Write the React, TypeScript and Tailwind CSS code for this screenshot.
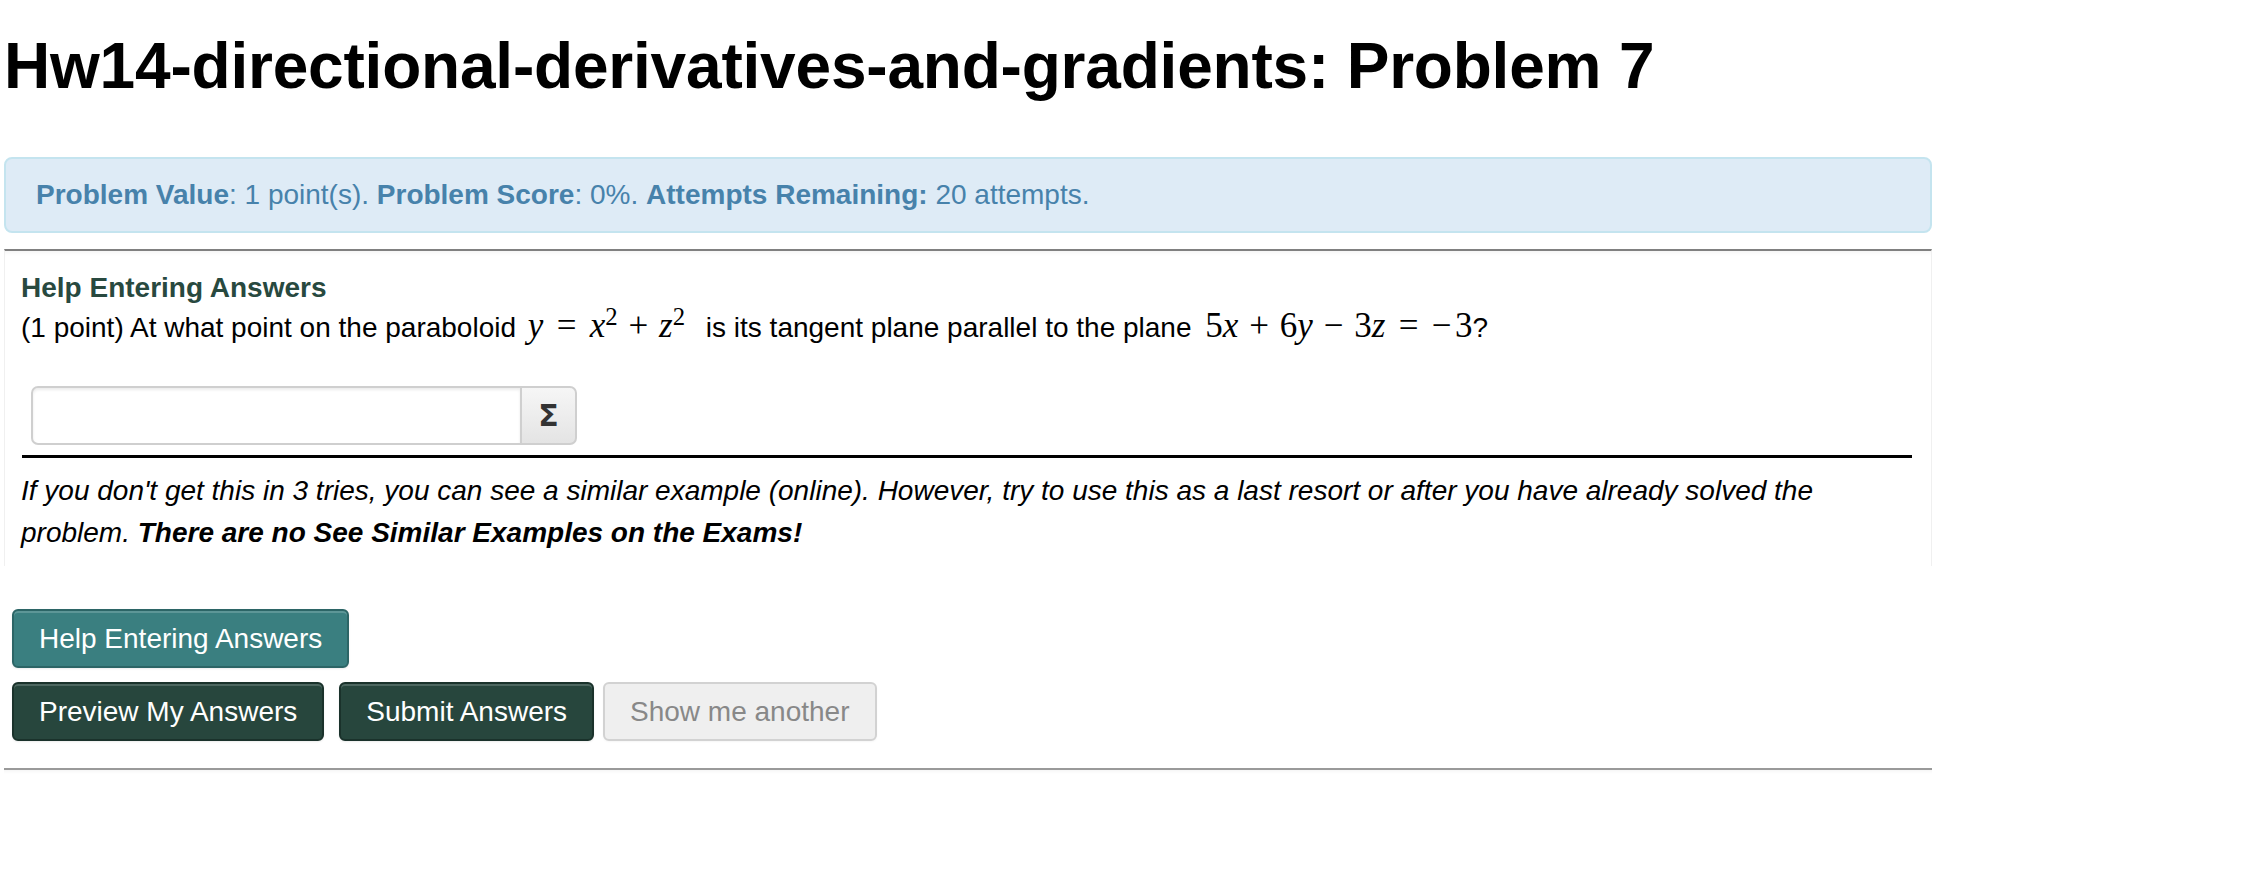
import React from 'react';

// --- Math helpers (TeX-like spacing on Liberation Serif) ---

const V = ({ children }: { children: React.ReactNode }) => <span className="italic">{children}</span>;

const Sup = ({ children }: { children: React.ReactNode }) => (
  <span className="text-[0.707em] leading-[0] align-[12px]">{children}</span>
);

const Rel = ({ children }: { children: React.ReactNode }) => <span className="mx-[0.38em]">{children}</span>;

const Bin = ({ children }: { children: React.ReactNode }) => <span className="mx-[0.31em]">{children}</span>;

const Math = ({ children, className = '' }: { children: React.ReactNode; className?: string }) => (
  <span className={`font-['Liberation_Serif','Times_New_Roman',serif] text-[35px] leading-[0] text-black ${className}`}>
    {children}
  </span>
);

// --- Components ---

const Button = ({ label, variant }: { label: string; variant: 'teal' | 'dark' | 'disabled' }) => {
  const styles = {
    teal: 'bg-[#3a7f80] border-[#2c6566] text-white shadow-[inset_0_2px_0_rgba(255,255,255,0.18),0_1px_2px_rgba(0,0,0,0.08)]',
    dark: 'bg-[#27463d] border-[#1a322b] text-white shadow-[inset_0_2px_0_rgba(255,255,255,0.18),0_1px_2px_rgba(0,0,0,0.08)]',
    disabled: 'bg-[#efefef] border-[#d2d2d2] text-[#888888] shadow-[0_1px_2px_rgba(0,0,0,0.04)]',
  };
  return (
    <button
      className={`h-[59px] px-[25px] rounded-[6px] border-2 text-[28px] leading-none flex items-center ${styles[variant]}`}
    >
      {label}
    </button>
  );
};

export default function App() {
  return (
    <div className="min-h-screen w-full bg-white font-['Liberation_Sans',Arial,Helvetica,sans-serif] text-black">
      <div className="ml-[4px] w-[1928px]">
        <h1 className="pt-[29px] text-[64px] leading-[74px] font-bold tracking-[-0.2px]">
          Hw14-directional-derivatives-and-gradients: Problem 7
        </h1>

        <div className="mt-[54px] h-[76px] rounded-[8px] border-2 border-[#c4e4ef] bg-[#deebf6] flex items-center pl-[30px] text-[28px] text-[#4782ab]">
          <span>
            <b>Problem Value</b>: 1 point(s). <b>Problem Score</b>: 0%. <b>Attempts Remaining:</b> 20 attempts.
          </span>
        </div>

        <div className="mt-[16px] border-t-2 border-t-[#808080] border-x border-x-[#f0f0f0] px-[16px] pt-[17px] pb-[12px] shadow-[inset_0_6px_6px_-6px_rgba(0,0,0,0.08)]">
          <div className="text-[28px] leading-[40px]">
            <div className="font-bold text-[#28493f]">Help Entering Answers</div>
            <div>
              (1 point) At what point on the paraboloid{' '}
              <Math className="ml-[4px] mr-[13px]">
                <V>y</V>
                <Rel>=</Rel>
                <V>x</V>
                <Sup>2</Sup>
                <Bin>+</Bin>
                <V>z</V>
                <Sup>2</Sup>
              </Math>{' '}
              is its tangent plane parallel to the plane{' '}
              <Math className="ml-[6px]">
                5<V>x</V>
                <Bin>+</Bin>6<V>y</V>
                <Bin>−</Bin>3<V>z</V>
                <Rel>=</Rel>
                <span className="mr-[0.1em]">−</span>3
              </Math>
              ?
            </div>
          </div>

          <div className="mt-[38px] ml-[10px] flex h-[59px] w-[548px]">
            <input
              type="text"
              className="h-full w-[491px] rounded-l-[7px] border-2 border-[#cfcfcf] bg-white px-3 text-[28px] shadow-[inset_0_2px_3px_rgba(0,0,0,0.08)] outline-none"
            />
            <button className="h-full w-[57px] -ml-[2px] rounded-r-[7px] border-2 border-[#cfcfcf] bg-gradient-to-b from-[#f6f6f6] to-[#e4e4e4] flex items-center justify-center font-['DejaVu_Sans',sans-serif] text-[30px] font-bold text-[#333333]">
              Σ
            </button>
          </div>

          <div className="mt-[10px] ml-[1px] w-[1890px] h-[3px] bg-black" />

          <p className="mt-[12px] text-[28px] leading-[42px] italic">
            If you don't get this in 3 tries, you can see a similar example (online). However, try to use this as a last
            resort or after you have already solved the problem. <b>There are no See Similar Examples on the Exams!</b>
          </p>
        </div>

        <div className="mt-[43px] ml-[8px] flex flex-col gap-[14px]">
          <div className="flex">
            <Button label="Help Entering Answers" variant="teal" />
          </div>
          <div className="flex">
            <Button label="Preview My Answers" variant="dark" />
            <div className="ml-[15px]">
              <Button label="Submit Answers" variant="dark" />
            </div>
            <div className="ml-[9px]">
              <Button label="Show me another" variant="disabled" />
            </div>
          </div>
        </div>

        <div className="mt-[27px] border-t-2 border-t-[#9a9a9a] h-[8px] shadow-[inset_0_5px_5px_-5px_rgba(0,0,0,0.08)]" />
      </div>
    </div>
  );
}
